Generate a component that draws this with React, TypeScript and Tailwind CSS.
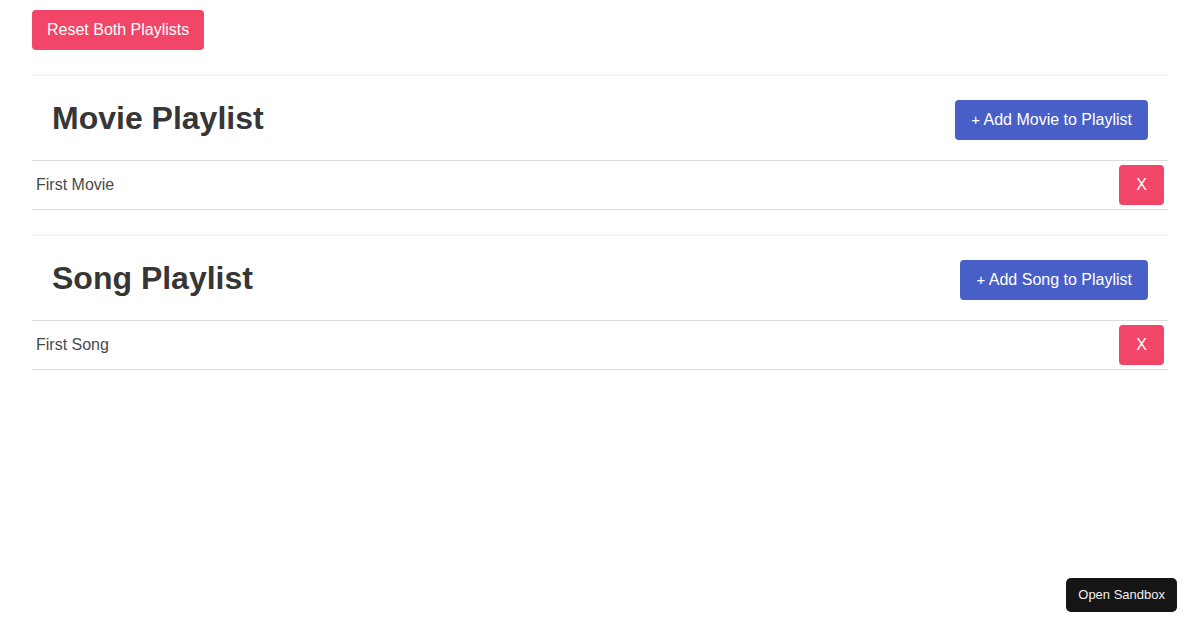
import { useState } from 'react';

const initialMovies = ['First Movie'];
const initialSongs = ['First Song'];

function Playlist({
  title,
  label,
  items,
  onAdd,
  onRemove,
}: {
  title: string;
  label: string;
  items: string[];
  onAdd: () => void;
  onRemove: (i: number) => void;
}) {
  return (
    <div>
      <hr className="h-[2px] border-0 bg-[#f5f5f5] my-6" />
      <div className="flex items-center justify-between px-5 pb-5">
        <h3 className="pb-1 text-[32px] font-bold leading-[36px] text-[#363636]">{title}</h3>
        <button
          onClick={onAdd}
          className="h-10 px-4 rounded bg-[#485fc7] text-white text-base"
        >
          <span className="text-[15px]">+</span> {label}
        </button>
      </div>
      <table className="w-full border-collapse">
        <tbody>
          {items.map((item, i) => (
            <tr key={i} className="border-y border-[#dbdbdb]">
              <td className="px-1 py-1 text-[#4a4a4a]">{item}</td>
              <td className="px-1 py-1 text-right">
                <button
                  onClick={() => onRemove(i)}
                  className="h-10 w-[45px] rounded bg-[#f14668] text-white"
                >
                  X
                </button>
              </td>
            </tr>
          ))}
        </tbody>
      </table>
    </div>
  );
}

export default function App() {
  const [movies, setMovies] = useState<string[]>(initialMovies);
  const [songs, setSongs] = useState<string[]>(initialSongs);

  return (
    <div className="min-h-screen bg-white font-['Liberation_Sans',Arial,sans-serif] text-base text-[#4a4a4a]">
      <div className="px-8 pt-[10px]">
        <button
          onClick={() => {
            setMovies([]);
            setSongs([]);
          }}
          className="h-10 px-[15px] rounded bg-[#f14668] text-white"
        >
          Reset Both Playlists
        </button>
        <Playlist
          title="Movie Playlist"
          label="Add Movie to Playlist"
          items={movies}
          onAdd={() => setMovies((m) => [...m, 'New Movie'])}
          onRemove={(i) => setMovies((m) => m.filter((_, j) => j !== i))}
        />
        <Playlist
          title="Song Playlist"
          label="Add Song to Playlist"
          items={songs}
          onAdd={() => setSongs((s) => [...s, 'New Song'])}
          onRemove={(i) => setSongs((s) => s.filter((_, j) => j !== i))}
        />
      </div>
      <button className="fixed right-[23px] bottom-[18px] h-[34px] px-3 rounded-[5px] bg-[#151515] text-[13px] text-[#f0f0f0]">
        Open Sandbox
      </button>
    </div>
  );
}
